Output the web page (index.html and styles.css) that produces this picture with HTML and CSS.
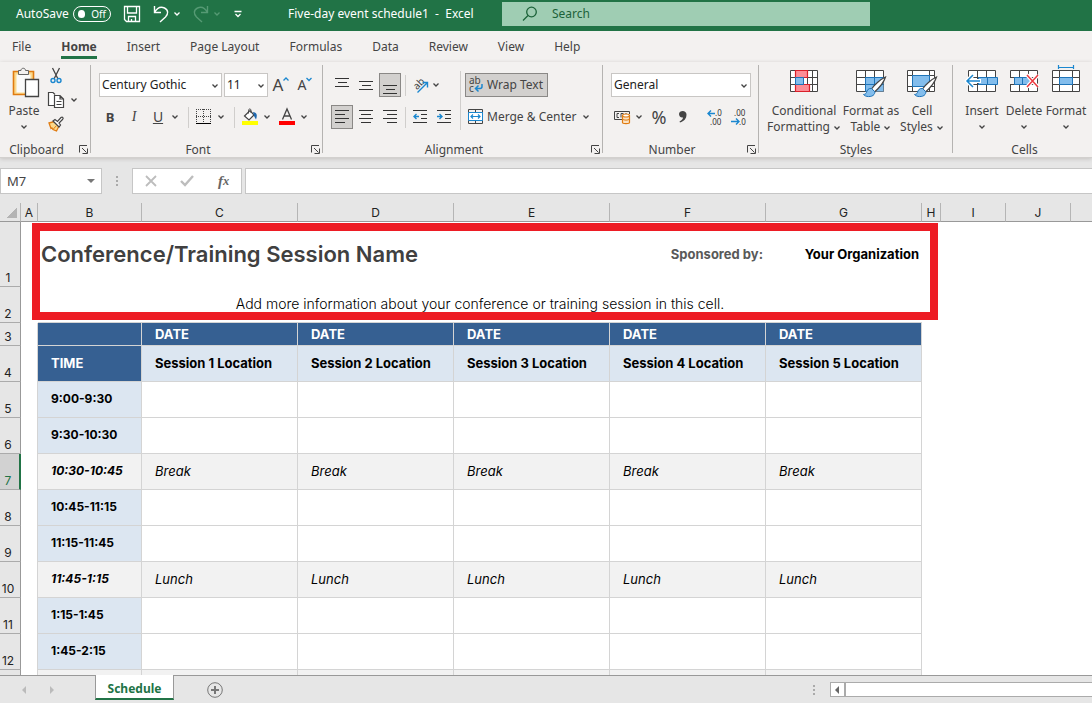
FILE: index.html
```html
<!DOCTYPE html>
<html lang="en">
<head>
    <meta charset="UTF-8">
    <meta name="viewport" content="width=device-width, initial-scale=1.0">
    <title>Five-day event schedule1 - Excel</title>
    <link rel="stylesheet" href="styles.css">
</head>
<body>
    <!-- shared icons -->
    <svg class="defs" aria-hidden="true">
        <symbol id="chev" viewBox="0 0 8 6"><path d="M1.5 1.5L4 4L6.5 1.5" fill="none" stroke="currentColor" stroke-width="1.3"/></symbol>
        <symbol id="launch" viewBox="0 0 9 9"><path d="M.5 7.500V.5H8M3 3L7.500 7.500M8.500 3.500V8.500H3.500" fill="none" stroke="#444"/></symbol>
        <symbol id="brush" viewBox="0 0 24 22">
            <path d="M22.500 1C18 3 11 9 8.500 13L11.500 16C16 12 21 6 22.500 1Z" fill="#fff" stroke="#444" stroke-width="1.200"/>
            <path d="M8.500 12.500C5 12 4 14.500 3.500 16.500C3 18 1.500 18.500 .5 18.500C2 21 9 21.500 11 18.500C12 17 12 16 11.500 15.500Z" fill="#83bdec" stroke="#1e74b9"/>
        </symbol>
    </svg>

    <header class="titlebar">
        <label class="autosave">AutoSave
            <input type="checkbox" class="autosave-input">
            <span class="toggle"><span class="knob"></span>Off</span>
        </label>
        <button class="tb-btn save" aria-label="Save">
            <svg width="18" height="18" viewBox="0 0 18 18" fill="none" stroke="#fff" stroke-width="1.300"><path d="M1.500 1.500H16.500V16.500H3.500L1.500 14.500ZM4.500 1.500V8H13.500V1.500M5.500 16.500V11.500H12.500V16.500M8.500 14V16"/></svg>
        </button>
        <button class="tb-btn undo" aria-label="Undo">
            <svg width="16" height="18" viewBox="0 0 16 18" fill="none" stroke="#fff" stroke-width="1.400"><path d="M1.500 1V7.500H8M1.500 7.500C4 3 8 1.500 11.500 3C15.500 5 15.500 9 12.500 12L7 17"/></svg>
            <svg class="chev"><use href="#chev"/></svg>
        </button>
        <button class="tb-btn redo" aria-label="Redo" disabled>
            <svg width="16" height="18" viewBox="0 0 16 18" fill="none" stroke="currentColor" stroke-width="1.400"><path d="M14.500 1V7.500H8M14.500 7.500C12 3 8 1.500 4.500 3C.5 5 .5 9 3.500 12L9 17"/></svg>
            <svg class="chev"><use href="#chev"/></svg>
        </button>
        <button class="tb-btn custom" aria-label="Customize Quick Access Toolbar">
            <svg width="8" height="8" viewBox="0 0 8 8" fill="none" stroke="#fff" stroke-width="1.300"><path d="M.5 1.500H7.500M1.500 4L4 6.500L6.500 4"/></svg>
        </button>
        <h1 class="doc-title">Five-day event schedule1&nbsp; -&nbsp; Excel</h1>
        <label class="search">
            <svg width="16" height="16" viewBox="0 0 16 16" fill="none" stroke="#1c6239" stroke-width="1.300"><circle cx="9.500" cy="6" r="4.800"/><path d="M6 9.500L1 14.500"/></svg>
            <input type="text" placeholder="Search" aria-label="Search">
        </label>
    </header>

    <nav class="tabs">
        <a href="#">File</a>
        <a href="#" class="active">Home</a>
        <a href="#">Insert</a>
        <a href="#">Page Layout</a>
        <a href="#">Formulas</a>
        <a href="#">Data</a>
        <a href="#">Review</a>
        <a href="#">View</a>
        <a href="#">Help</a>
    </nav>

    <div class="ribbon">
        <section class="group clipboard">
            <div class="tools">
                <button class="big paste">
                    <svg width="28" height="32" viewBox="0 0 28 32">
                        <path d="M1.500 4.500H21.500V27.500H1.500Z" fill="#fbd98c" stroke="#e07b10" stroke-width="1.600"/>
                        <path d="M4.500 7.500H18.500V25.500H4.500Z" fill="#fafafa"/>
                        <path d="M6.500 7.500V3.500H9C9 .5 13.500 .5 13.500 3.500H16.500V7.500Z" fill="#f3f1f0" stroke="#666"/>
                        <path d="M13.500 12.500H26.500V29.500H13.500Z" fill="#fff" stroke="#444" stroke-width="1.300"/>
                    </svg>
                    <span>Paste</span>
                    <svg class="chev"><use href="#chev"/></svg>
                </button>
                <div class="stack">
                    <button class="tool" aria-label="Cut">
                        <svg width="16" height="18" viewBox="0 0 16 18" fill="none"><path d="M4.500 1L10 12M11.500 1L6 12" stroke="#444" stroke-width="1.300"/><circle cx="5" cy="13.500" r="2" stroke="#1b87cf" stroke-width="1.400"/><circle cx="11" cy="13.500" r="2" stroke="#1b87cf" stroke-width="1.400"/></svg>
                    </button>
                    <button class="tool copy" aria-label="Copy">
                        <svg width="16" height="17" viewBox="0 0 16 17" fill="#fff" stroke="#444" stroke-width="1.200"><path d="M6 13.500H.5V.5H5L7 2.500"/><path d="M6.500 3.500H12L15.500 7V15.500H6.500ZM12 3.500V7H15.500M8.500 9.500H13.500M8.500 12.500H13.500"/></svg>
                        <svg class="chev"><use href="#chev"/></svg>
                    </button>
                    <button class="tool" aria-label="Format Painter">
                        <svg width="16" height="16" viewBox="0 0 16 16"><path d="M1 7L6.500 5.500L11 10L8.500 15L5 13.500L4 12L3 12.500Z" fill="#fbd98c" stroke="#e07b10" stroke-width="1.300"/><path d="M5 5L7 3.500L9.500 5.500L13 1.500C14.500 .5 16 2 14.500 3.500L11 7L12.500 9L11 11Z" fill="#fff" stroke="#444" stroke-width="1.200"/><path d="M5 13.500L8.500 9.500" stroke="#e07b10"/></svg>
                    </button>
                </div>
            </div>
            <footer><span>Clipboard</span><button class="launcher" aria-label="Clipboard settings"><svg><use href="#launch"/></svg></button></footer>
        </section>

        <section class="group font">
            <div class="tools rows">
                <div class="row">
                    <div class="combo font-name"><select aria-label="Font"><option>Century Gothic</option></select><svg class="chev"><use href="#chev"/></svg></div>
                    <div class="combo font-size"><select aria-label="Font size"><option>11</option></select><svg class="chev"><use href="#chev"/></svg></div>
                    <button class="tool glyph big-a" aria-label="Increase font size">A<svg width="6" height="5" viewBox="0 0 6 5"><path d="M.5 3.500L3 1L5.500 3.500" fill="none" stroke="#1b87cf" stroke-width="1.300"/></svg></button>
                    <button class="tool glyph small-a" aria-label="Decrease font size">A<svg width="6" height="5" viewBox="0 0 6 5"><path d="M.5 1L3 3.500L5.500 1" fill="none" stroke="#1b87cf" stroke-width="1.300"/></svg></button>
                </div>
                <div class="row">
                    <button class="tool glyph"><b>B</b></button>
                    <button class="tool glyph"><i class="serif">I</i></button>
                    <button class="tool glyph"><u>U</u></button>
                    <button class="drop" aria-label="Underline options"><svg class="chev"><use href="#chev"/></svg></button>
                    <span class="sep"></span>
                    <button class="tool" aria-label="Borders"><svg width="16" height="16" viewBox="0 0 16 16" fill="none" shape-rendering="crispEdges"><path d="M0 .5H15M0 7.500H15M.5 0V14M7.500 0V14M14.500 0V14" stroke="#444" stroke-dasharray="1 1"/><path d="M0 14.500H15" stroke="#000"/></svg></button>
                    <button class="drop" aria-label="Border options"><svg class="chev"><use href="#chev"/></svg></button>
                    <span class="sep"></span>
                    <button class="tool" aria-label="Fill color"><svg width="16" height="18" viewBox="0 0 16 18"><path d="M2.500 8L8 2.500L12 7L7 12Z" fill="#fff" stroke="#444" stroke-width="1.200"/><path d="M6.500 5.500V2.500C6.500 .5 9 .5 9 2.500V5" fill="none" stroke="#444"/><path d="M11 4C15 4.500 15.500 7 14 11.500L12 8Z" fill="#1e67ad"/><path d="M0 13H16V17H0Z" fill="#ff0"/></svg></button>
                    <button class="drop" aria-label="Fill options"><svg class="chev"><use href="#chev"/></svg></button>
                    <button class="tool" aria-label="Font color"><svg width="16" height="18" viewBox="0 0 16 18"><path d="M3.500 11.500L8 1L12.500 11.500M5 8H11" fill="none" stroke="#444" stroke-width="1.300"/><path d="M0 13H16V17H0Z" fill="#f00"/></svg></button>
                    <button class="drop" aria-label="Font color options"><svg class="chev"><use href="#chev"/></svg></button>
                </div>
            </div>
            <footer><span>Font</span><button class="launcher" aria-label="Font settings"><svg><use href="#launch"/></svg></button></footer>
        </section>

        <section class="group alignment">
            <div class="tools">
                <div class="rows">
                    <div class="row">
                        <button class="tool" aria-label="Top align"><svg class="lines" width="14" height="20"><path d="M0 3.500H14M3 7.500H12M0 11.500H14"/></svg></button>
                        <button class="tool" aria-label="Middle align"><svg class="lines" width="14" height="20"><path d="M0 6.500H14M3 10.500H12M0 14.500H14"/></svg></button>
                        <button class="tool on" aria-label="Bottom align"><svg class="lines" width="14" height="20"><path d="M0 10.500H14M3 14.500H12M0 18.500H14"/></svg></button>
                        <span class="sep"></span>
                        <button class="tool orient" aria-label="Orientation">
                            <svg width="17" height="17" viewBox="0 0 17 17"><text x="2" y="12" transform="rotate(-45 5 9)" class="ab">ab</text><path d="M5.500 15.500L15.500 5.500M10.500 5.500H15.500V10.500" fill="none" stroke="#1b87cf" stroke-width="1.400"/></svg>
                            <svg class="chev"><use href="#chev"/></svg>
                        </button>
                    </div>
                    <div class="row">
                        <button class="tool on" aria-label="Align left"><svg class="lines" width="14" height="20"><path d="M0 3.500H14M0 7.500H10M0 11.500H14M0 15.500H10"/></svg></button>
                        <button class="tool" aria-label="Center"><svg class="lines" width="14" height="20"><path d="M0 3.500H14M2 7.500H12M0 11.500H14M2 15.500H12"/></svg></button>
                        <button class="tool" aria-label="Align right"><svg class="lines" width="14" height="20"><path d="M0 3.500H14M4 7.500H14M0 11.500H14M4 15.500H14"/></svg></button>
                        <span class="sep"></span>
                        <button class="tool" aria-label="Decrease indent"><svg class="lines" width="14" height="20"><path d="M0 3.500H14M8 7.500H14M8 11.500H14M0 15.500H14"/><path class="arrow" d="M6 9.500H1M3.500 7L1 9.500L3.500 12"/></svg></button>
                        <button class="tool" aria-label="Increase indent"><svg class="lines" width="14" height="20"><path d="M0 3.500H14M8 7.500H14M8 11.500H14M0 15.500H14"/><path class="arrow" d="M0 9.500H5M2.500 7L5 9.500L2.500 12"/></svg></button>
                    </div>
                </div>
                <span class="sep tall"></span>
                <div class="rows">
                    <div class="row">
                        <button class="wide on">
                            <svg width="16" height="18" viewBox="0 0 16 18"><text x="1" y="8" class="ab">ab</text><text x="1" y="16" class="ab">c</text><path d="M14 8V10.500C14 12 13.500 12.500 12 12.500H8M10.500 9.500L7.500 12.500L10.500 15.500" fill="none" stroke="#1b87cf" stroke-width="1.500"/></svg>
                            Wrap Text
                        </button>
                    </div>
                    <div class="row">
                        <button class="wide">
                            <svg width="16" height="16" viewBox="0 0 16 16" fill="none"><path d="M.5 .5H14.500V14.500H.5ZM7.500 .5V14.500M.5 3.500H14.500M.5 11.500H14.500" stroke="#444"/><path d="M.5 3.500H14.500V11.500H.5Z" fill="#fff" stroke="#1b87cf"/><path d="M3 7.500H12M5 5.500L3 7.500L5 9.500M10 5.500L12 7.500L10 9.500" stroke="#1b87cf" stroke-width="1.200"/></svg>
                            Merge &amp; Center
                        </button>
                        <button class="drop" aria-label="Merge options"><svg class="chev"><use href="#chev"/></svg></button>
                    </div>
                </div>
            </div>
            <footer><span>Alignment</span><button class="launcher" aria-label="Alignment settings"><svg><use href="#launch"/></svg></button></footer>
        </section>

        <section class="group number">
            <div class="tools rows">
                <div class="row">
                    <div class="combo num-format"><select aria-label="Number format"><option>General</option></select><svg class="chev"><use href="#chev"/></svg></div>
                </div>
                <div class="row">
                    <button class="tool" aria-label="Accounting format"><svg width="17" height="16" viewBox="0 0 17 16" fill="none"><path d="M8 10.500H.5V2.500H15.500V5" stroke="#444"/><path d="M5 4.500H3V8.500H5M9.500 4.500H7V8.500M12 4V6" stroke="#444"/><path d="M8.500 6.500V13.500C8.500 15 15.500 15 15.500 13.500V6.500" fill="#fbe3c4" stroke="#e07b10" stroke-width="1.200"/><ellipse cx="12" cy="6.500" rx="3.500" ry="1.500" fill="#fff" stroke="#e07b10" stroke-width="1.200"/><path d="M8.500 10C9.500 11.500 14.500 11.500 15.500 10" stroke="#e07b10"/></svg></button>
                    <button class="drop" aria-label="Accounting options"><svg class="chev"><use href="#chev"/></svg></button>
                    <button class="tool glyph percent">%</button>
                    <button class="tool" aria-label="Comma style"><svg width="10" height="16" viewBox="0 0 10 16"><path d="M1 5C1 1 8.500 .5 8.500 5.500C8.500 10 6 12 2 13.500L1.500 12.500C4 11 5 10 5 8.500C2.500 9 1 7 1 5Z" fill="#444"/></svg></button>
                    <span class="sep"></span>
                    <button class="tool" aria-label="Increase decimal"><svg width="16" height="17" viewBox="0 0 16 17"><path d="M8 4.500H1M4 1.500L1 4.500L4 7.500" fill="none" stroke="#1b87cf" stroke-width="1.400"/><text x="8" y="7" class="dec">.0</text><text x="3" y="16" class="dec">.00</text></svg></button>
                    <button class="tool" aria-label="Decrease decimal"><svg width="16" height="17" viewBox="0 0 16 17"><path d="M0 12.500H8M5 9.500L8 12.500L5 15.500" fill="none" stroke="#1b87cf" stroke-width="1.400"/><text x="3" y="7" class="dec">.00</text><text x="8" y="16" class="dec">.0</text></svg></button>
                </div>
            </div>
            <footer><span>Number</span><button class="launcher" aria-label="Number settings"><svg><use href="#launch"/></svg></button></footer>
        </section>

        <section class="group styles">
            <div class="tools">
                <button class="big cond">
                    <svg width="30" height="32" viewBox="0 0 30 32"><path d="M1.500 3.500H28.500V24.500H1.500ZM1.500 10.500H28.500M1.500 17.500H28.500M6.500 3.500V24.500M18.500 3.500V24.500M23.500 3.500V24.500" fill="#fff" stroke="#444"/><path d="M6.500 3.500H18.500V10.500H6.500ZM6.500 17.500H20.500V24.500H6.500Z" fill="#fc8d96" stroke="#d9202a" stroke-width="1.200"/><path d="M6.500 10.500H14.500V17.500H6.500Z" fill="#83bdec" stroke="#1e74b9"/></svg>
                    <span>Conditional<br>Formatting <svg class="chev"><use href="#chev"/></svg></span>
                </button>
                <button class="big table-fmt">
                    <svg width="32" height="32" viewBox="0 0 32 32"><path d="M1.500 3.500H28.500V24.500H1.500Z" fill="#fff" stroke="#444"/><path d="M10.500 10.500H28.500V24.500H10.500Z" fill="#83bdec"/><path d="M1.500 10.500H28.500M1.500 17.500H28.500M10.500 3.500V24.500M19.500 3.500V24.500" stroke="#444"/><path d="M10.500 10.500H28.500M10.500 17.500H28.500M10.500 10.500V24.500M19.500 10.500V24.500" stroke="#1e74b9"/><use href="#brush" x="8" y="9" width="24" height="22"/></svg>
                    <span>Format as<br>Table <svg class="chev"><use href="#chev"/></svg></span>
                </button>
                <button class="big cell-fmt">
                    <svg width="32" height="32" viewBox="0 0 32 32"><path d="M1.500 3.500H28.500V24.500H1.500ZM1.500 8.500H28.500M1.500 19.500H28.500M6.500 3.500V24.500M23.500 3.500V24.500" fill="#fff" stroke="#444"/><path d="M6.500 8.500H23.500V19.500H6.500Z" fill="#83bdec" stroke="#1e74b9"/><use href="#brush" x="8" y="9" width="24" height="22"/></svg>
                    <span>Cell<br>Styles <svg class="chev"><use href="#chev"/></svg></span>
                </button>
            </div>
            <footer><span>Styles</span></footer>
        </section>

        <section class="group cells">
            <div class="tools">
                <button class="big">
                    <svg width="32" height="32" viewBox="0 0 32 32"><path d="M2.500 3.500H29.500V24.500H2.500ZM2.500 10.500H29.500M2.500 17.500H29.500M11.500 3.500V24.500M20.500 3.500V24.500" fill="#fff" stroke="#444"/><path d="M12.500 10.500H31.500V17.500H12.500ZM21.500 10.500V17.500" fill="#83bdec" stroke="#1e74b9"/><path d="M15 14H1M7 8L1 14L7 20" fill="none" stroke="#fff" stroke-width="4"/><path d="M14 14H1M7 8L1 14L7 20" fill="none" stroke="#1b87cf" stroke-width="1.500"/></svg>
                    <span>Insert</span>
                    <svg class="chev"><use href="#chev"/></svg>
                </button>
                <button class="big">
                    <svg width="32" height="32" viewBox="0 0 32 32"><path d="M2.500 3.500H29.500V24.500H2.500ZM2.500 10.500H29.500M2.500 17.500H29.500M11.500 3.500V24.500M20.500 3.500V24.500" fill="#fff" stroke="#444"/><path d="M0 11H8V17H0Z" fill="#f3f1f0"/><path d="M6.500 10.500H22.500V17.500H6.500ZM14.500 10.500V17.500" fill="#83bdec" stroke="#1e74b9"/><path d="M19 8L30 20M30 8L19 20" stroke="#fff" stroke-width="4"/><path d="M19 8L30 20M30 8L19 20" stroke="#ec3a3f" stroke-width="1.500"/></svg>
                    <span>Delete</span>
                    <svg class="chev"><use href="#chev"/></svg>
                </button>
                <button class="big">
                    <svg width="32" height="32" viewBox="0 0 32 32"><path d="M2.500 3.500H29.500V24.500H2.500ZM2.500 10.500H29.500M2.500 17.500H29.500M9.500 3.500V24.500M22.500 3.500V24.500" fill="#fff" stroke="#444"/><path d="M9.500 10.500H22.500V17.500H9.500Z" fill="#83bdec" stroke="#1e74b9"/><path d="M8.500 -2V2M23.500 -2V2M8.500 .5H23.500" stroke="#1b87cf" stroke-width="1.200"/></svg>
                    <span>Format</span>
                    <svg class="chev"><use href="#chev"/></svg>
                </button>
            </div>
            <footer><span>Cells</span></footer>
        </section>
    </div>

    <div class="formula-bar">
        <div class="name-box"><input type="text" value="M7" aria-label="Name box"><span class="caret"></span></div>
        <span class="dots"><i></i><i></i><i></i></span>
        <div class="fx-buttons">
            <button aria-label="Cancel"><svg width="12" height="12" viewBox="0 0 12 12"><path d="M1 1L11 11M11 1L1 11" stroke="#bdbdbd" stroke-width="1.800"/></svg></button>
            <button aria-label="Enter"><svg width="14" height="12" viewBox="0 0 14 12"><path d="M1 6L5 10L13 1" fill="none" stroke="#bdbdbd" stroke-width="2.400"/></svg></button>
            <button class="fx" aria-label="Insert function">f<small>x</small></button>
        </div>
        <input type="text" class="formula" aria-label="Formula">
    </div>

    <main class="sheet">
        <table class="grid">
            <colgroup>
                <col class="c-num"><col class="c-a"><col class="c-b">
                <col class="c-day"><col class="c-day"><col class="c-day"><col class="c-day"><col class="c-day">
                <col class="c-h"><col class="c-std"><col class="c-std"><col>
            </colgroup>
            <thead>
                <tr><th class="corner"></th><th>A</th><th>B</th><th>C</th><th>D</th><th>E</th><th>F</th><th>G</th><th>H</th><th>I</th><th>J</th><th></th></tr>
            </thead>
            <tbody>
                <tr class="r-title"><th>1</th><td></td><td colspan="4" class="title">Conference/Training Session Name</td><td class="sponsor">Sponsored by:</td><td class="org">Your Organization</td><td colspan="4"></td></tr>
                <tr class="r-info"><th>2</th><td></td><td colspan="6" class="info">Add more information about your conference or training session in this cell.</td><td colspan="4"></td></tr>
                <tr class="r-date"><th>3</th><td class="edge"></td><td></td><td>DATE</td><td>DATE</td><td>DATE</td><td>DATE</td><td>DATE</td><td colspan="4" class="blank"></td></tr>
                <tr class="r-loc"><th>4</th><td class="edge"></td><td>TIME</td><td>Session 1 Location</td><td>Session 2 Location</td><td>Session 3 Location</td><td>Session 4 Location</td><td>Session 5 Location</td><td colspan="4" class="blank"></td></tr>
                <tr class="slot"><th>5</th><td class="edge"></td><td>9:00-9:30</td><td></td><td></td><td></td><td></td><td></td><td colspan="4" class="blank"></td></tr>
                <tr class="slot"><th>6</th><td class="edge"></td><td>9:30-10:30</td><td></td><td></td><td></td><td></td><td></td><td colspan="4" class="blank"></td></tr>
                <tr class="slot pause current"><th>7</th><td class="edge"></td><td>10:30-10:45</td><td>Break</td><td>Break</td><td>Break</td><td>Break</td><td>Break</td><td colspan="4" class="blank"></td></tr>
                <tr class="slot"><th>8</th><td class="edge"></td><td>10:45-11:15</td><td></td><td></td><td></td><td></td><td></td><td colspan="4" class="blank"></td></tr>
                <tr class="slot"><th>9</th><td class="edge"></td><td>11:15-11:45</td><td></td><td></td><td></td><td></td><td></td><td colspan="4" class="blank"></td></tr>
                <tr class="slot pause"><th>10</th><td class="edge"></td><td>11:45-1:15</td><td>Lunch</td><td>Lunch</td><td>Lunch</td><td>Lunch</td><td>Lunch</td><td colspan="4" class="blank"></td></tr>
                <tr class="slot"><th>11</th><td class="edge"></td><td>1:15-1:45</td><td></td><td></td><td></td><td></td><td></td><td colspan="4" class="blank"></td></tr>
                <tr class="slot"><th>12</th><td class="edge"></td><td>1:45-2:15</td><td></td><td></td><td></td><td></td><td></td><td colspan="4" class="blank"></td></tr>
                <tr class="slot pause"><th></th><td class="edge"></td><td></td><td></td><td></td><td></td><td></td><td></td><td colspan="4" class="blank"></td></tr>
            </tbody>
        </table>
        <div class="highlight"></div>
    </main>

    <footer class="sheet-bar">
        <button class="arrow-btn prev" aria-label="Previous sheet"></button>
        <button class="arrow-btn next" aria-label="Next sheet"></button>
        <a href="#" class="sheet-tab">Schedule</a>
        <button class="add" aria-label="New sheet"><svg width="16" height="16" viewBox="0 0 16 16" fill="none" stroke="#777"><circle cx="8" cy="8" r="7.300"/><path d="M8 4V12M4 8H12" stroke-width="2"/></svg></button>
        <span class="dots"><i></i><i></i><i></i></span>
        <div class="scroll"><button aria-label="Scroll left"></button></div>
    </footer>
</body>
</html>
```
FILE: styles.css
```css
* {
    margin: 0;
    padding: 0;
    box-sizing: border-box;
}
body {
    height: 100vh;
    display: flex;
    flex-direction: column;
    overflow: hidden;
    background: #e6e6e6;
    color: #444;
    font-family: "Segoe UI", "Noto Sans", sans-serif;
    font-size: 12px;
    line-height: 16px;
}
button, input, select {
    font: inherit;
    color: inherit;
    background: none;
    border: none;
    border-radius: 0;
    outline: none;
}
a {
    color: inherit;
    text-decoration: none;
}
svg {
    flex: none;
    overflow: visible;
}
.defs {
    position: absolute;
    width: 0;
    height: 0;
}
.chev {
    width: 8px;
    height: 6px;
}

/* title bar */
.titlebar {
    flex: none;
    height: 31px;
    display: flex;
    align-items: center;
    padding: 0 16px 3px;
    background: #217346;
    color: #fff;
}
.autosave {
    display: flex;
    align-items: center;
    gap: 4px;
    width: 94px;
}
.autosave-input {
    position: absolute;
    opacity: 0;
}
.toggle {
    display: flex;
    align-items: center;
    gap: 6px;
    width: 38px;
    height: 16px;
    padding: 0 4px;
    border: 1px solid #fff;
    border-radius: 8px;
    font-size: 10px;
}
.knob {
    width: 8px;
    height: 8px;
    border-radius: 50%;
    background: #fff;
}
.tb-btn {
    display: flex;
    align-items: center;
    gap: 4px;
}
.save {
    margin-left: 13px;
}
.undo {
    margin-left: 12px;
}
.redo {
    margin-left: 12px;
    color: #569a74;
}
.custom {
    margin-left: 13px;
}
.doc-title {
    margin-left: 46px;
    width: 214px;
    font-size: 12px;
    font-weight: normal;
    white-space: nowrap;
}
.search {
    flex: 0 1 368px;
    height: 24px;
    display: flex;
    align-items: center;
    gap: 14px;
    padding-left: 20px;
    background: #9fcdb3;
    color: #1c6239;
}
.search input {
    flex: 1;
    min-width: 0;
}
.search input::placeholder {
    color: #1c6239;
}

/* ribbon tabs */
.tabs {
    flex: none;
    height: 31px;
    display: flex;
    gap: 30px;
    padding: 8px 12px 0;
    background: #f3f1f0;
}
.tabs a {
    height: 20px;
    white-space: nowrap;
}
.tabs .active {
    font-weight: bold;
    border-bottom: 3px solid #217346;
}

/* ribbon */
.ribbon {
    flex: none;
    height: 96px;
    display: flex;
    background: #f3f1f0;
    border-bottom: 1px solid #d2d0ce;
    box-shadow: 0 1px 4px #c4c2c0;
    overflow: hidden;
}
.group {
    flex: none;
    display: flex;
    flex-direction: column;
    position: relative;
    padding: 0 8px;
}
.group::after {
    content: "";
    position: absolute;
    top: 3px;
    bottom: 4px;
    right: 0;
    width: 1px;
    background: #b5b3b1;
}
.clipboard { width: 91px; }
.font { width: 232px; }
.alignment { width: 280px; }
.number { width: 156px; }
.styles { width: 194px; }
.cells { width: 143px; }
.group footer {
    display: flex;
    align-items: center;
    height: 15px;
}
.group footer span {
    flex: 1;
    text-align: center;
}
.group footer span:not(:last-child) {
    padding-right: 14px;
}
.launcher {
    width: 9px;
    height: 9px;
    margin-right: -5px;
}
.launcher svg {
    display: block;
    width: 9px;
    height: 9px;
}
.tools {
    display: flex;
    height: 80px;
}
.rows {
    display: flex;
    flex-direction: column;
    gap: 8px;
    padding-top: 11px;
}
.row {
    display: flex;
    align-items: center;
    height: 24px;
}
.tool {
    flex: none;
    display: flex;
    align-items: center;
    justify-content: center;
    width: 22px;
    height: 24px;
    margin-right: 2px;
}
.on {
    background: #d2d0ce;
    outline: 1px solid #8a8886;
    outline-offset: -1px;
}
.drop {
    flex: none;
    display: flex;
    justify-content: center;
    width: 12px;
    margin: 0 3px 0 -2px;
}
.sep {
    width: 1px;
    height: 21px;
    margin: 0 4px;
    background: #d0cecc;
}
.alignment .row .sep {
    margin: 0 3px 0 2px;
}
.sep.tall {
    height: 59px;
    margin: 9px 4px 0 3px;
}
.big {
    display: flex;
    flex-direction: column;
    align-items: center;
    white-space: nowrap;
    padding-top: 5px;
}
.big > svg:first-child {
    margin-bottom: 4px;
}
.big > .chev {
    margin-top: 5px;
}
.big span .chev {
    vertical-align: middle;
}

.clipboard .tools {
    gap: 6px;
}
.paste {
    width: 32px;
}
.paste > svg:first-child {
    margin-left: 4px;
}
.stack {
    display: flex;
    flex-direction: column;
    padding-top: 2px;
}
.stack .tool {
    width: 20px;
}
.stack .copy {
    width: 34px;
    gap: 6px;
}

.combo {
    flex: none;
    position: relative;
    height: 24px;
    border: 1px solid #c8c6c4;
    background: #fff;
}
.combo select {
    appearance: none;
    width: 100%;
    height: 100%;
    padding-left: 2px;
    color: #222;
}
.combo .chev {
    position: absolute;
    right: 2px;
    top: 9px;
    pointer-events: none;
}
.font-name {
    width: 123px;
}
.font-size {
    width: 44px;
    margin: 0 2px;
}
.num-format {
    width: 140px;
}
.glyph {
    font-size: 14px;
}
.glyph b {
    font-size: 13px;
}
.serif {
    font-family: "Liberation Serif", serif;
}
.big-a {
    font-size: 17px;
}
.small-a {
    font-size: 14px;
}
.big-a svg, .small-a svg {
    margin-bottom: 12px;
}
.percent {
    font-size: 18px;
}
.lines {
    fill: none;
    stroke: #333;
    shape-rendering: crispEdges;
}
.lines .arrow {
    stroke: #1b87cf;
    stroke-width: 1.4px;
    shape-rendering: auto;
}
.orient {
    width: 34px;
    gap: 3px;
}
.ab {
    font-size: 10px;
    fill: #444;
}
.dec {
    font-size: 8px;
    fill: #333;
}
.wide {
    flex: none;
    display: flex;
    align-items: center;
    gap: 3px;
    height: 24px;
    padding: 0 5px 0 3px;
    white-space: nowrap;
}
.styles .tools {
    gap: 4px;
}
.cond { width: 74px; }
.table-fmt { width: 52px; }
.cell-fmt { width: 42px; }
.cells .big {
    width: 42px;
}

/* formula bar */
.formula-bar {
    flex: none;
    display: flex;
    height: 45px;
    padding-top: 10px;
    padding-bottom: 9px;
}
.name-box {
    display: flex;
    align-items: center;
    width: 102px;
    border: 1px solid #c6c6c6;
    background: #fff;
    padding: 0 6px;
    font-size: 13px;
}
.name-box input {
    flex: 1;
    min-width: 0;
}
.caret {
    border: 4px solid transparent;
    border-top-color: #777;
    border-bottom: none;
}
.dots {
    display: flex;
    flex-direction: column;
    justify-content: center;
    align-items: center;
    gap: 2px;
    width: 30px;
}
.dots i {
    width: 2px;
    height: 2px;
    background: #aaa;
}
.fx-buttons {
    display: flex;
    align-items: center;
    justify-content: space-around;
    width: 110px;
    border: 1px solid #c6c6c6;
    background: #fff;
}
.fx-buttons button {
    display: flex;
}
.fx {
    font-family: "Liberation Serif", serif;
    font-style: italic;
    font-weight: bold;
    font-size: 15px;
    color: #666;
}
.formula {
    flex: 1;
    margin-left: 3px;
    border: 1px solid #c6c6c6;
    border-right: none;
    background: #fff;
}

/* sheet */
.sheet {
    flex: 1;
    min-height: 0;
    position: relative;
    overflow: hidden;
    background: #fff;
}
.grid {
    width: 100%;
    table-layout: fixed;
    border-collapse: separate;
    border-spacing: 0;
    color: #000;
    font-family: "Century Gothic", Inter, sans-serif;
    font-size: 13px;
    white-space: nowrap;
}
.c-num { width: 21px; }
.c-a { width: 17px; }
.c-b { width: 104px; }
.c-day { width: 156px; }
.c-h { width: 19px; }
.c-std { width: 65px; }
.grid td {
    padding-bottom: 2px;
}
.grid th {
    font-weight: normal;
    background: #e6e6e6;
    color: #222;
    font-size: 12px;
}
.grid thead th {
    height: 19px;
    padding-top: 2px;
    border-right: 1px solid #b5b5b5;
    border-bottom: 1px solid #999;
}
.grid thead th:last-child {
    border-right: none;
}
.grid .corner {
    background: linear-gradient(135deg, #e6e6e6 50%, #b4b4b4 50%) 7px 5px / 10px 10px no-repeat #e6e6e6;
}
.grid tbody th {
    border-right: 1px solid #999;
    border-bottom: 1px solid #ababab;
    vertical-align: bottom;
    padding-right: 4px;
}
.r-title { height: 65px; }
.r-info { height: 36px; }
.r-date { height: 23px; }
.r-loc, .slot { height: 36px; }
.title {
    padding-left: 3px;
    font-size: 22px;
    font-weight: 600;
    color: #404040;
}
.sponsor, .org {
    padding-right: 3px;
    text-align: right;
    font-weight: bold;
}
.sponsor {
    color: #595959;
}
.grid .info {
    padding-bottom: 10px;
    text-align: center;
    vertical-align: bottom;
    font-size: 14px;
    font-weight: 300;
    border-bottom: 1px solid #d4d4d4;
}
.r-date td, .r-loc td, .slot td {
    padding-left: 13px;
    border-right: 1px solid #d4d4d4;
    border-bottom: 1px solid #d4d4d4;
}
.grid .edge {
    padding: 0;
    border-bottom: none;
}
.grid .blank {
    border: none;
    background: #fff;
}
.r-date td, .r-loc td {
    font-weight: bold;
}
.r-date td {
    padding-bottom: 0;
}
.r-loc td, .slot td:nth-child(3) {
    background: #dce6f1;
}
.r-date td, .r-loc td:nth-child(3) {
    background: #366092;
    color: #fff;
}
.slot td:nth-child(3) {
    font-size: 12px;
    font-weight: bold;
}
.slot.pause td {
    background: #f2f2f2;
    font-style: italic;
}
.grid tr .edge, .grid .slot.pause .edge, .grid .slot.pause .blank {
    background: #fff;
}
.grid .current th {
    background: #d2d2d2;
    color: #217346;
    border-right: 2px solid #217346;
    padding-right: 3px;
}
.highlight {
    position: absolute;
    left: 32px;
    top: 20px;
    width: 906px;
    height: 97px;
    border: 8px solid #ed1c24;
}

/* sheet tabs */
.sheet-bar {
    flex: none;
    display: flex;
    height: 28px;
    border-top: 1px solid #999;
}
.arrow-btn {
    width: 28px;
    display: flex;
    align-items: center;
    justify-content: center;
}
.prev {
    margin-left: 10px;
}
.next {
    margin-right: 29px;
}
.arrow-btn::before, .scroll button::before {
    content: "";
    border: 4px solid transparent;
    border-left: none;
    border-right-color: #bbb;
}
.next::before {
    border-left: 4px solid #bbb;
    border-right: none;
}
.sheet-tab {
    width: 79px;
    height: 25px;
    margin-top: -1px;
    padding-top: 6px;
    text-align: center;
    font-weight: bold;
    color: #217346;
    background: #fff;
    border: 1px solid #999;
    border-top: none;
    border-bottom: 2px solid #217346;
}
.add {
    width: 16px;
    margin-left: 33px;
    display: flex;
    align-items: center;
}
.sheet-bar .dots {
    margin-left: auto;
    width: 32px;
}
.scroll {
    width: 24%;
    height: 15px;
    margin-top: 6px;
    border: 1px solid #ababab;
    border-right: none;
    background: #fff;
}
.scroll button {
    display: flex;
    align-items: center;
    justify-content: center;
    width: 15px;
    height: 13px;
    border-right: 2px solid #ababab;
}
.scroll button::before {
    border-right-color: #666;
}
```
